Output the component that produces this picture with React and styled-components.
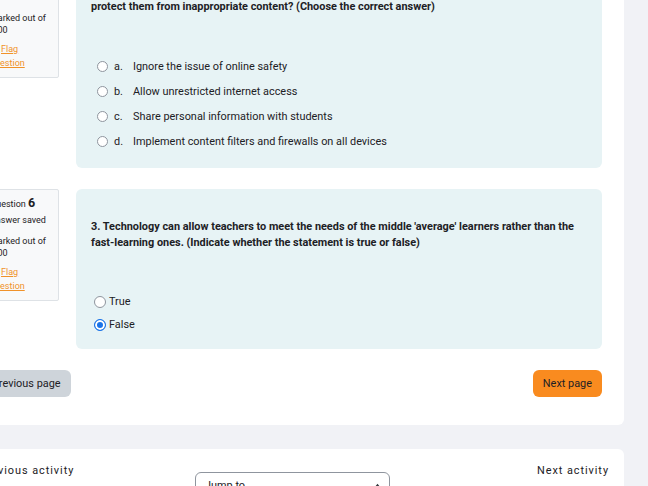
import React from "react";
import styled, { createGlobalStyle } from "styled-components";

const Global = createGlobalStyle`
  html, body { margin: 0; padding: 0; }
  body {
    background: #f1f2f6;
    font-family: Roboto, "Liberation Sans", Arial, sans-serif;
    color: #1d2125;
    overflow: hidden;
  }
  * { box-sizing: border-box; }
`;

const Page = styled.div`
  width: 648px;
  height: 486px;
  overflow: hidden;
`;

const MainPanel = styled.div`
  margin-left: -40px;
  margin-top: -47px;
  width: 664px;
  background: #fff;
  border-radius: 0 0 6px 6px;
  padding: 0 22px 28px 22px;
`;

const QuestionRow = styled.div`
  display: flex;
  align-items: flex-start;
  gap: 17px;
  margin-bottom: 21px;
`;

const Info = styled.div`
  flex: 0 0 77px;
  width: 77px;
  padding: 6px 8px 7px 7px;
  background: #f8f9fa;
  border: 1px solid #dee2e6;
  border-radius: 2px;
  font-size: 9px;
`;

const QNumber = styled.h3`
  margin: 0 0 3px;
  font-size: 9px;
  font-weight: 400;
  line-height: 14px;
  span {
    font-size: 12.5px;
    font-weight: 700;
  }
`;

const InfoLine = styled.div`
  line-height: ${(p) => p.$lh || 13}px;
  margin-bottom: ${(p) => p.$mb || 0}px;
  color: #1d2125;
`;

const FlagLink = styled.a`
  display: block;
  color: #f0922a;
  text-decoration: underline;
  line-height: 13.5px;
  svg { vertical-align: -1px; margin-right: 3px; }
`;

const Formulation = styled.div`
  flex: 1;
  background: #e7f3f5;
  border-radius: 6px;
  padding: 30px 15px ${(p) => p.$pb}px;
`;

const QText = styled.div`
  font-weight: 700;
  font-size: 10.9px;
  line-height: 16px;
  margin-bottom: 39px;
`;

const NoWrap = styled.span`
  white-space: nowrap;
`;

const Option = styled.label`
  display: flex;
  align-items: center;
  height: ${(p) => p.$h}px;
  font-size: 10.9px;
  padding-left: ${(p) => p.$pl}px;
`;

const Radio = styled.input.attrs({ type: "radio" })`
  appearance: none;
  -webkit-appearance: none;
  margin: 0 ${(p) => p.$mr}px 0 0;
  width: ${(p) => p.$size}px;
  height: ${(p) => p.$size}px;
  border-radius: 50%;
  border: 1px solid #8f959e;
  background: #fff;
  flex: 0 0 auto;
  &:checked {
    border: 1.5px solid #1a73e8;
    background: #1a73e8;
    box-shadow: inset 0 0 0 2px #fff;
  }
`;

const Letter = styled.span`
  width: 19px;
  flex: 0 0 19px;
`;

const ButtonRow = styled.div`
  display: flex;
  justify-content: space-between;
  margin-top: 20px;
`;

const NavButton = styled.button`
  height: 27px;
  padding: 0 10px;
  border: none;
  border-radius: 6px;
  font-family: inherit;
  font-size: 10.9px;
  color: #1d2125;
  background: ${(p) => (p.$primary ? "#f98b1f" : "#ced4da")};
`;

const ActivityPanel = styled.div`
  margin-left: -40px;
  margin-top: 24px;
  width: 664px;
  height: 80px;
  background: #fff;
  border-radius: 6px 6px 0 0;
  padding: 15px 15px 0 19px;
  display: grid;
  grid-template-columns: 216px 195px 1fr;
  align-items: start;
`;

const ActivityLink = styled.a`
  font-size: 10.9px;
  line-height: 14px;
  letter-spacing: 0.95px;
  color: #1d2125;
  text-decoration: none;
  text-align: ${(p) => p.$align};
`;

const JumpSelect = styled.div`
  margin-top: 8px;
  height: 26px;
  border: 1px solid #8f959e;
  border-radius: 6px;
  padding: 3px 9px 0;
  display: flex;
  align-items: flex-start;
  justify-content: space-between;
  font-size: 10.9px;
  line-height: 20px;
`;

const FlagIcon = () => (
  <svg width="8" height="9" viewBox="0 0 8 9">
    <path d="M1 9V1h5l-1 2 1 2H1" fill="none" stroke="#8f959e" strokeWidth="1" />
  </svg>
);

const SortIcon = () => (
  <svg width="5" height="8" viewBox="0 0 5 8" style={{ marginTop: 7 }}>
    <path d="M0.5 3.2L2.5 0.8L4.5 3.2Z M0.5 4.8L2.5 7.2L4.5 4.8Z" fill="#343a40" />
  </svg>
);

const InfoBlock = ({ n, state }) => (
  <Info>
    <QNumber>
      Question <span>{n}</span>
    </QNumber>
    <InfoLine $mb={8}>{state}</InfoLine>
    <InfoLine $lh={12} $mb={7}>
      Marked out of 1.00
    </InfoLine>
    <FlagLink href="#">
      <FlagIcon />
      Flag question
    </FlagLink>
  </Info>
);

const mcOptions = [
  ["a.", "Ignore the issue of online safety"],
  ["b.", "Allow unrestricted internet access"],
  ["c.", "Share personal information with students"],
  ["d.", "Implement content filters and firewalls on all devices"],
];

export default function App() {
  return (
    <Page>
      <Global />
      <MainPanel>
        <QuestionRow>
          <InfoBlock n={5} state="Not yet answered" />
          <Formulation $pb={14}>
            <QText>
              2. What should teachers do to keep students safe online and to
              <br />
              protect them from inappropriate content? (Choose the correct answer)
            </QText>
            {mcOptions.map(([l, t]) => (
              <Option key={l} $h={25} $pl={6}>
                <Radio name="q5" $size={11} $mr={6} />
                <Letter>{l}</Letter>
                {t}
              </Option>
            ))}
          </Formulation>
        </QuestionRow>
        <QuestionRow>
          <InfoBlock n={6} state="Answer saved" />
          <Formulation $pb={13}>
            <QText>
              3. Technology can allow teachers to meet the needs of the middle 'average' learners rather than the{" "}
              <NoWrap>fast-learning</NoWrap> ones. (Indicate whether the statement is true or false)
            </QText>
            <Option $h={23} $pl={3}>
              <Radio name="q6" $size={12} $mr={3} />
              True
            </Option>
            <Option $h={23} $pl={3}>
              <Radio name="q6" $size={12} $mr={3} defaultChecked />
              False
            </Option>
          </Formulation>
        </QuestionRow>
        <ButtonRow>
          <NavButton>Previous page</NavButton>
          <NavButton $primary>Next page</NavButton>
        </ButtonRow>
      </MainPanel>
      <ActivityPanel>
        <ActivityLink href="#" $align="left">Previous activity</ActivityLink>
        <JumpSelect>
          <span>Jump to...</span>
          <SortIcon />
        </JumpSelect>
        <ActivityLink href="#" $align="right">Next activity</ActivityLink>
      </ActivityPanel>
    </Page>
  );
}
